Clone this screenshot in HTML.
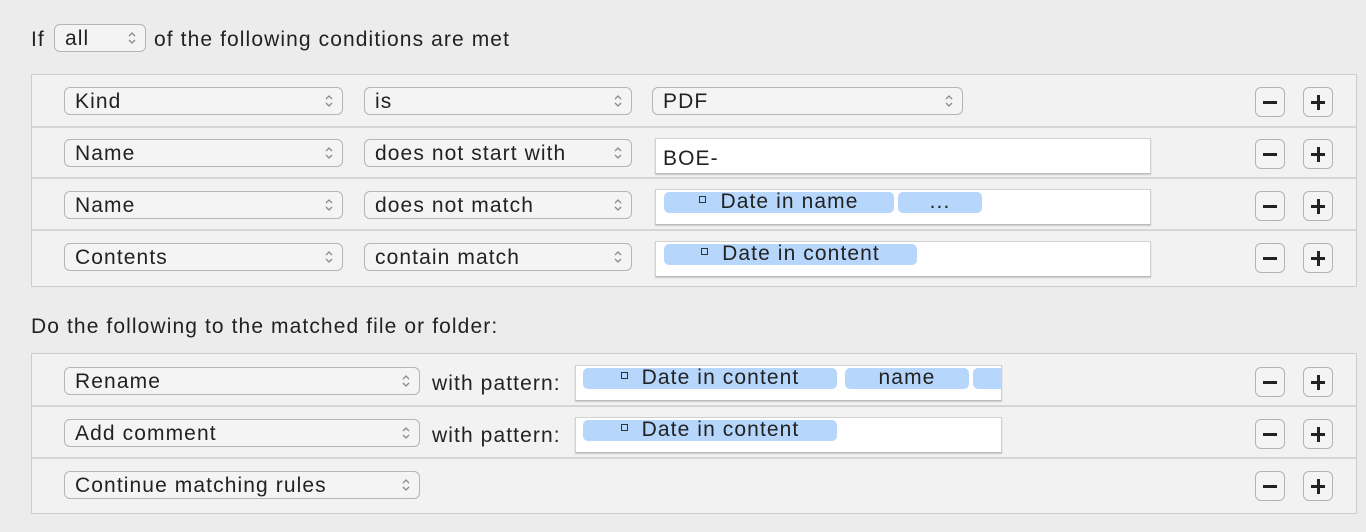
<html><head><style>
body{margin:0;background:#ececec;font-family:"Liberation Sans",sans-serif;font-size:21px;letter-spacing:1.1px;color:#222;width:1366px;height:532px;overflow:hidden;position:relative}
.a{position:absolute}
.box{position:absolute;left:31px;width:1324px;background:#f2f2f2;border:1px solid #cdcdcd}
.row{position:absolute;left:0;width:1324px;border-bottom:2px solid #d6d6d6}
.pop{position:absolute;height:26px;border:1px solid #b5b5b5;border-radius:6px;background:#f4f4f4;line-height:28px;padding-left:10px;box-sizing:content-box}
.arr{position:absolute;right:8px;top:6px;width:10px;height:14px}
.fld{position:absolute;height:34px;background:#fff;border:1px solid #d0d0d0;border-bottom:1px solid #bdbdbd;box-shadow:0 1px 1px #c8c8c8}
.tok{position:absolute;top:2px;height:21px;background:#b7d6fb;border-radius:5px;line-height:20px;text-align:center}
.sq{display:inline-block;width:5px;height:5px;border:1px solid #333;vertical-align:5px;margin-right:14px}
.btn{position:absolute;width:28px;height:28px;border:1px solid #b3b3b3;border-radius:6px;background:#f4f4f4}
.btn i{position:absolute;left:7px;top:13px;width:14px;height:3px;background:#222}
.btn b{position:absolute;left:13px;top:7px;width:3px;height:15px;background:#222}
</style></head><body>
<svg width="0" height="0" style="position:absolute"><defs><symbol id="ar" viewBox="0 0 10 14"><path d="M2 5 L5 2 L8 5 M2 9 L5 12 L8 9" fill="none" stroke="#8a8a8a" stroke-width="1.3"/></symbol></defs></svg>
<div class="a" style="left:31px;top:28px">If</div>
<div class="pop" style="left:54px;top:24px;width:80px">all<svg class="arr"><use href="#ar"/></svg></div>
<div class="a" style="left:154px;top:28px">of the following conditions are met</div>

<div class="box" style="top:74px;height:211px">
<div class="row" style="top:0;height:51px"></div>
<div class="row" style="top:52px;height:50px"></div>
<div class="row" style="top:104px;height:50px"></div>
</div>
<div class="a" style="left:31px;top:315px">Do the following to the matched file or folder:</div>
<div class="box" style="top:353px;height:159px">
<div class="row" style="top:0;height:51px"></div>
<div class="row" style="top:53px;height:50px"></div>
</div>

<div class="pop" style="left:64px;top:87px;width:267px">Kind<svg class="arr"><use href="#ar"/></svg></div>
<div class="pop" style="left:364px;top:87px;width:256px">is<svg class="arr"><use href="#ar"/></svg></div>
<div class="pop" style="left:652px;top:87px;width:299px">PDF<svg class="arr"><use href="#ar"/></svg></div>

<div class="pop" style="left:64px;top:139px;width:267px">Name<svg class="arr"><use href="#ar"/></svg></div>
<div class="pop" style="left:364px;top:139px;width:256px">does not start with<svg class="arr"><use href="#ar"/></svg></div>
<div class="fld" style="left:655px;top:138px;width:494px"><span class="a" style="left:7px;top:8px">BOE-</span></div>

<div class="pop" style="left:64px;top:191px;width:267px">Name<svg class="arr"><use href="#ar"/></svg></div>
<div class="pop" style="left:364px;top:191px;width:256px">does not match<svg class="arr"><use href="#ar"/></svg></div>
<div class="fld" style="left:655px;top:189px;width:494px">
<div class="tok" style="left:8px;width:230px"><span class="sq"></span>Date in name</div>
<div class="tok" style="left:242px;width:84px">...</div></div>

<div class="pop" style="left:64px;top:243px;width:267px">Contents<svg class="arr"><use href="#ar"/></svg></div>
<div class="pop" style="left:364px;top:243px;width:256px">contain match<svg class="arr"><use href="#ar"/></svg></div>
<div class="fld" style="left:655px;top:241px;width:494px">
<div class="tok" style="left:8px;width:253px"><span class="sq"></span>Date in content</div></div>

<div class="pop" style="left:64px;top:367px;width:344px">Rename<svg class="arr"><use href="#ar"/></svg></div>
<div class="a" style="left:432px;top:372px">with pattern:</div>
<div class="fld" style="left:575px;top:365px;width:425px">
<div class="tok" style="left:7px;width:254px"><span class="sq"></span>Date in content</div>
<div class="tok" style="left:269px;width:124px">name</div>
<div class="tok" style="left:397px;width:28px;border-radius:5px 0 0 5px"></div></div>

<div class="pop" style="left:64px;top:419px;width:344px">Add comment<svg class="arr"><use href="#ar"/></svg></div>
<div class="a" style="left:432px;top:424px">with pattern:</div>
<div class="fld" style="left:575px;top:417px;width:425px">
<div class="tok" style="left:7px;width:254px"><span class="sq"></span>Date in content</div></div>

<div class="pop" style="left:64px;top:471px;width:344px">Continue matching rules<svg class="arr"><use href="#ar"/></svg></div>

<div class="btn" style="left:1255px;top:87px"><i></i></div><div class="btn" style="left:1303px;top:87px"><i></i><b></b></div>
<div class="btn" style="left:1255px;top:139px"><i></i></div><div class="btn" style="left:1303px;top:139px"><i></i><b></b></div>
<div class="btn" style="left:1255px;top:191px"><i></i></div><div class="btn" style="left:1303px;top:191px"><i></i><b></b></div>
<div class="btn" style="left:1255px;top:243px"><i></i></div><div class="btn" style="left:1303px;top:243px"><i></i><b></b></div>
<div class="btn" style="left:1255px;top:367px"><i></i></div><div class="btn" style="left:1303px;top:367px"><i></i><b></b></div>
<div class="btn" style="left:1255px;top:419px"><i></i></div><div class="btn" style="left:1303px;top:419px"><i></i><b></b></div>
<div class="btn" style="left:1255px;top:471px"><i></i></div><div class="btn" style="left:1303px;top:471px"><i></i><b></b></div>
</body></html>
